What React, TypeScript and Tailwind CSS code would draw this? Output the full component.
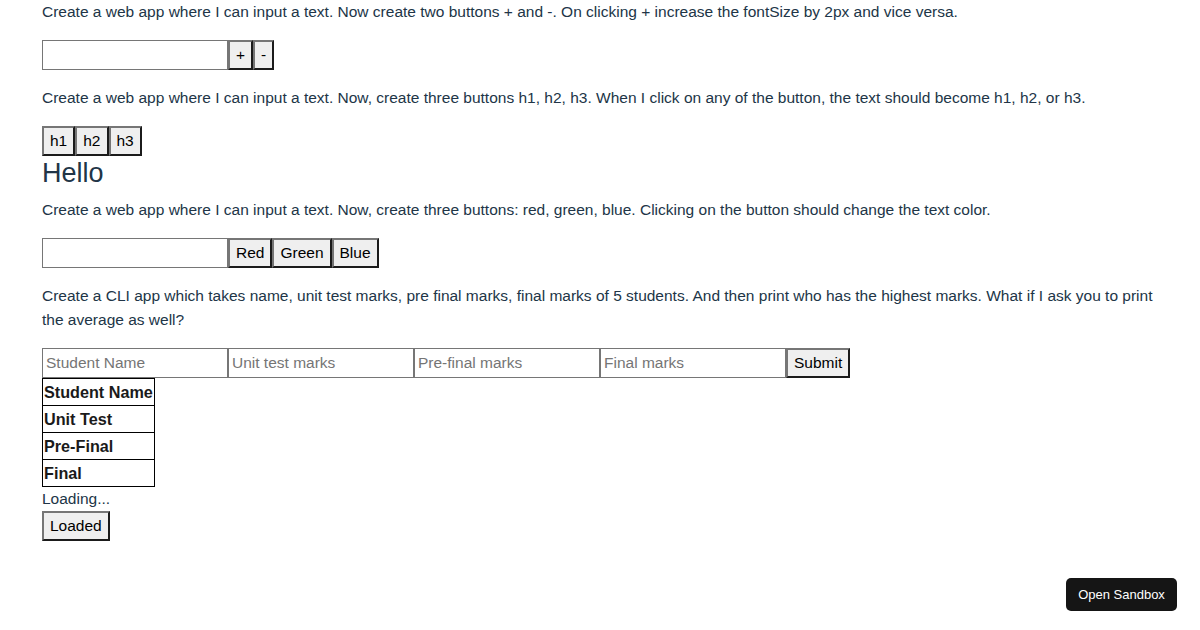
export default function App() {
  const btn =
    "h-[30px] px-[6px] bg-[#efefef] border-2 border-t-[#767676] border-l-[#767676] border-r-[#1b1b1b] border-b-[#1b1b1b] text-black text-[15.5px] leading-[24px]";
  const input =
    "h-[30px] w-[186px] px-[3px] py-[2px] border border-[#767676] bg-white text-[15.5px] leading-[24px] outline-none placeholder:text-[#757575]";
  const cell =
    "border border-black pl-[1px] pr-[1px] py-[1px] text-left font-bold text-[16.2px] leading-[24px] text-[#1a1a1a]";

  return (
    <div className="min-h-[630px] bg-white pl-[42px] pr-[40px] text-[15.5px] leading-[24px] text-[#213547] font-['Liberation_Sans',Arial,sans-serif]">
      <p>
        Create a web app where I can input a text. Now create two buttons + and -. On clicking + increase the
        fontSize by 2px and vice versa.
      </p>
      <div className="mt-4 flex">
        <input className={input} />
        <button className={btn}>+</button>
        <button className={btn}>-</button>
      </div>

      <p className="mt-4">
        Create a web app where I can input a text. Now, create three buttons h1, h2, h3. When I click on any of the
        button, the text should become h1, h2, or h3.
      </p>
      <div className="mt-4 flex">
        <button className={btn}>h1</button>
        <button className={btn}>h2</button>
        <button className={btn}>h3</button>
      </div>
      <div className="text-[27px] leading-[34px] pb-[8px]">Hello</div>

      <p>
        Create a web app where I can input a text. Now, create three buttons: red, green, blue. Clicking on the
        button should change the text color.
      </p>
      <div className="mt-4 flex">
        <input className={input} />
        <button className={btn}>Red</button>
        <button className={btn}>Green</button>
        <button className={btn}>Blue</button>
      </div>

      <p className="mt-4">
        Create a CLI app which takes name, unit test marks, pre final marks, final marks of 5 students. And then print
        who has the highest marks. What if I ask you to print the average as well?
      </p>
      <div className="mt-4 flex">
        <input className={input} placeholder="Student Name" />
        <input className={input} placeholder="Unit test marks" />
        <input className={input} placeholder="Pre-final marks" />
        <input className={input} placeholder="Final marks" />
        <button className={btn}>Submit</button>
      </div>
      <table className="border-collapse border border-black">
        <tbody>
          <tr>
            <th className={cell}>Student Name</th>
          </tr>
          <tr>
            <th className={cell}>Unit Test</th>
          </tr>
          <tr>
            <th className={cell}>Pre-Final</th>
          </tr>
          <tr>
            <th className={cell}>Final</th>
          </tr>
        </tbody>
      </table>
      <div>Loading...</div>
      <button className={btn}>Loaded</button>

      <button className="fixed bottom-[19px] right-[23px] h-[33px] w-[111px] rounded-[5px] bg-[#151515] text-[13px] text-white">
        Open Sandbox
      </button>
    </div>
  );
}
